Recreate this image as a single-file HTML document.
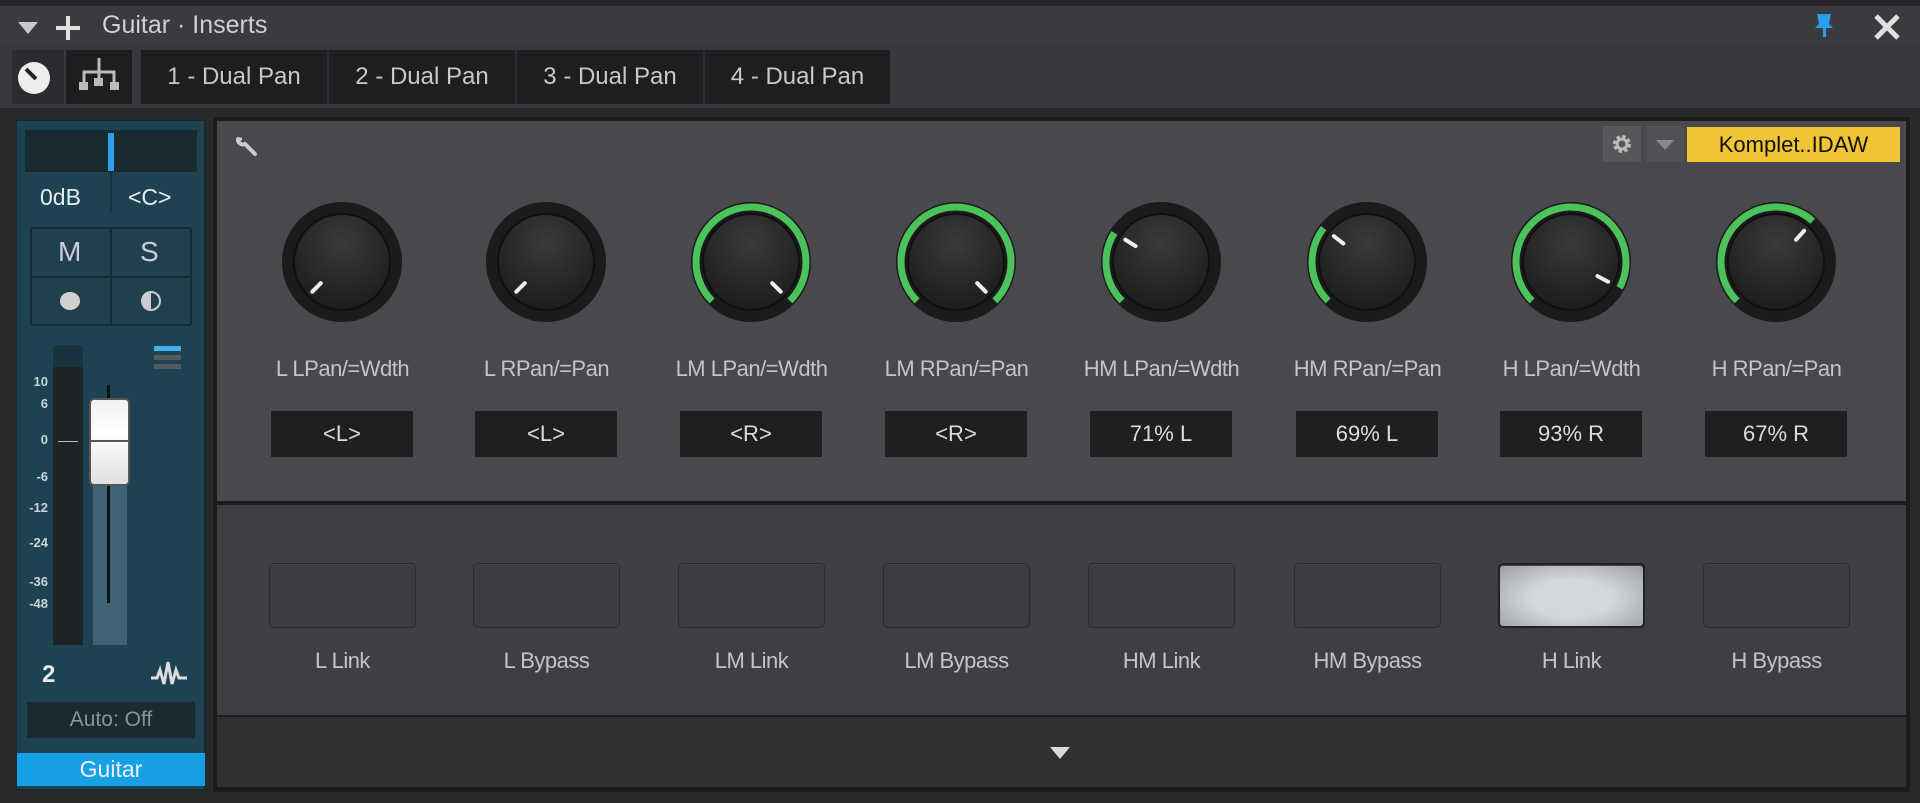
<!DOCTYPE html>
<html><head><meta charset="utf-8"><style>
*{margin:0;padding:0;box-sizing:border-box}
body{width:1920px;height:803px;background:#26272a;font-family:"Liberation Sans",sans-serif;position:relative;overflow:hidden;color:#c9cacc}
.a{position:absolute}
.tab{position:absolute;top:50px;height:54px;background:#1d1e20;color:#c8c9cb;font-size:24px;line-height:54px;text-align:center;border-right:2px solid #2c2d30}
.lbl{position:absolute;width:205px;text-align:center;font-size:22px;color:#c3c4c6;letter-spacing:-0.5px}
.val{position:absolute;width:142px;height:46px;background:#1e1f21;text-align:center;line-height:46px;font-size:22px;color:#dcdcdc}
.btn{position:absolute;width:147px;height:65px;border-radius:5px;background:#3b3c3f;border:1px solid #2a2b2d;box-shadow:inset 0 1px 0 #46474a}
.sc{position:absolute;left:24px;width:24px;text-align:right;font-size:13px;font-weight:bold;color:#c8d4da}
</style></head><body>
<div class="a" style="left:0;top:0;width:1920px;height:6px;background:#232426"></div>
<div class="a" style="left:0;top:6px;width:1920px;height:40px;background:#3a3b3e"></div>
<svg class="a" style="left:16px;top:14px" width="30" height="30"><polygon points="2,8 22,8 12,20" fill="#c8c8c8"/></svg>
<svg class="a" style="left:54px;top:14px" width="30" height="30"><rect x="2" y="12" width="24" height="4" fill="#e0e0e0"/><rect x="12" y="2" width="4" height="24" fill="#e0e0e0"/></svg>
<div class="a" style="left:102px;top:11px;font-size:25px;color:#d0d0d0">Guitar · Inserts</div>
<svg class="a" style="left:1812px;top:12px" width="26" height="30"><path d="M5 2h14l-2 10 4 4H3l4-4z" fill="#2a9ff0"/><rect x="11" y="15" width="3" height="10" fill="#2a9ff0"/></svg>
<svg class="a" style="left:1872px;top:12px" width="30" height="30"><path d="M4 4L26 26M26 4L4 26" stroke="#e0e0e0" stroke-width="5"/></svg>
<div class="a" style="left:0;top:46px;width:1920px;height:62px;background:#37383b"></div>
<div class="a" style="left:12px;top:50px;width:52px;height:54px;background:#2b2c2f"></div>
<svg class="a" style="left:14px;top:58px" width="40" height="40"><circle cx="20" cy="20" r="16" fill="#eee"/><path d="M12 11L22 21" stroke="#222" stroke-width="4"/></svg>
<div class="a" style="left:66px;top:50px;width:66px;height:54px;background:#1d1e20"></div>
<svg class="a" style="left:74px;top:56px" width="50" height="42"><g fill="none" stroke="#bbb" stroke-width="3"><path d="M25 2v12M10 26v-10h30v10M25 14v10"/></g><rect x="5" y="26" width="9" height="8" fill="#bbb"/><rect x="20" y="22" width="9" height="8" fill="#bbb"/><rect x="36" y="26" width="9" height="8" fill="#bbb"/></svg>
<div class="tab" style="left:141px;width:188px">1 - Dual Pan</div>
<div class="tab" style="left:329px;width:188px">2 - Dual Pan</div>
<div class="tab" style="left:517px;width:188px">3 - Dual Pan</div>
<div class="tab" style="left:705px;width:185px;border-right:none">4 - Dual Pan</div>
<div class="a" style="left:0;top:108px;width:1920px;height:695px;background:#29292c"></div>
<div class="a" style="left:15px;top:119px;width:191px;height:672px;background:#1d4252;border:2px solid #142c36"></div>
<div class="a" style="left:25px;top:130px;width:172px;height:42px;background:#1a2a31"></div>
<div class="a" style="left:108px;top:133px;width:6px;height:38px;background:#2aa2ef"></div>
<div class="a" style="left:110px;top:172px;width:2px;height:40px;background:#163340"></div>
<div class="a" style="left:40px;top:184px;font-size:23px;color:#e8eef0">0dB</div>
<div class="a" style="left:128px;top:184px;font-size:23px;color:#e8eef0">&lt;C&gt;</div>
<div class="a" style="left:30px;top:227px;width:162px;height:99px;background:#21404e;border:2px solid #132b35;border-radius:3px"></div>
<div class="a" style="left:110px;top:229px;width:2px;height:95px;background:#132b35"></div>
<div class="a" style="left:32px;top:276px;width:158px;height:2px;background:#132b35"></div>
<div class="a" style="left:58px;top:236px;font-size:28px;color:#ccd">M</div>
<div class="a" style="left:140px;top:236px;font-size:28px;color:#ccd">S</div>
<div class="a" style="left:60px;top:292px;width:20px;height:18px;border-radius:50%;background:#d0d0d0"></div>
<svg class="a" style="left:140px;top:290px" width="24" height="22"><circle cx="11" cy="11" r="9" fill="none" stroke="#ccc" stroke-width="2"/><path d="M11 2a9 9 0 0 0 0 18z" fill="#ccc"/></svg>
<div class="a" style="left:53px;top:345px;width:30px;height:300px;background:#1d2226"></div>
<div class="a" style="left:53px;top:345px;width:30px;height:22px;background:#18323e"></div>
<div class="a" style="left:93px;top:485px;width:34px;height:160px;background:#3f6575"></div>
<div class="a" style="left:107px;top:385px;width:3px;height:218px;background:#0c1418"></div>
<div class="a" style="left:89px;top:398px;width:41px;height:88px;border-radius:5px;background:linear-gradient(#f2f2f2,#fff 40%,#e0e0e0);border:2px solid #555"></div>
<div class="a" style="left:91px;top:440px;width:37px;height:2px;background:#555"></div>
<div class="sc" style="top:374px">10</div><div class="sc" style="top:396px">6</div>
<div class="sc" style="top:432px">0</div><div class="sc" style="top:469px">-6</div>
<div class="sc" style="top:500px">-12</div><div class="sc" style="top:535px">-24</div>
<div class="sc" style="top:574px">-36</div><div class="sc" style="top:596px">-48</div>
<div class="a" style="left:58px;top:441px;width:20px;height:1px;background:#bbb"></div>
<div class="a" style="left:154px;top:346px;width:27px;height:5px;background:#46b0ee"></div>
<div class="a" style="left:154px;top:355px;width:27px;height:5px;background:#55595c"></div>
<div class="a" style="left:154px;top:364px;width:27px;height:5px;background:#55595c"></div>
<div class="a" style="left:42px;top:661px;font-size:24px;font-weight:bold;color:#e6eaec">2</div>
<svg class="a" style="left:150px;top:660px" width="40" height="28"><path d="M1 18h6l3-8 4 14 4-22 4 22 4-14 3 8h8" fill="none" stroke="#ddd" stroke-width="3"/></svg>
<div class="a" style="left:27px;top:702px;width:168px;height:36px;background:#1a2a31;text-align:center;line-height:36px;font-size:21px;color:#8b9398">Auto: Off</div>
<div class="a" style="left:17px;top:753px;width:188px;height:33px;background:#16a1e4;text-align:center;line-height:33px;font-size:23px;color:#eef">Guitar</div>
<div class="a" style="left:213px;top:117px;width:1697px;height:675px;background:#1c1c1e"></div>
<div class="a" style="left:217px;top:121px;width:1689px;height:380px;background:#48494c"></div>
<div class="a" style="left:217px;top:505px;width:1689px;height:210px;background:#3e3f42"></div>
<div class="a" style="left:217px;top:717px;width:1689px;height:70px;background:#2f3032"></div>
<svg class="a" style="left:233px;top:133px" width="28" height="28"><path d="M5 6a5 5 0 0 0 7 5l10 10" fill="none" stroke="#ccc" stroke-width="4" stroke-linecap="round"/><path d="M5 6l4 0" stroke="#ccc" stroke-width="3"/></svg>
<div class="a" style="left:1603px;top:126px;width:38px;height:36px;background:#56575a"></div>
<svg class="a" style="left:1610px;top:132px" width="24" height="24"><circle cx="12" cy="12" r="7" fill="none" stroke="#bbb" stroke-width="4" stroke-dasharray="3.2 2.3"/><circle cx="12" cy="12" r="5" fill="none" stroke="#bbb" stroke-width="3"/></svg>
<div class="a" style="left:1646px;top:126px;width:38px;height:36px;background:#505154"></div>
<svg class="a" style="left:1654px;top:138px" width="22" height="14"><polygon points="2,2 20,2 11,12" fill="#888"/></svg>
<div class="a" style="left:1687px;top:127px;width:213px;height:35px;background:#f1c535;color:#111;font-size:22px;line-height:35px;text-align:center">Komplet..IDAW</div>
<svg id="kn" class="a" style="left:0;top:0" width="1920" height="803"></svg>
<div id="ctl"></div>
<svg class="a" style="left:1048px;top:745px" width="24" height="16"><polygon points="2,2 22,2 12,14" fill="#d8d8d8"/></svg>
<script>
var cx=[342,546,751,956,1161,1367,1571,1776],cy=262;
var names=["L LPan/=Wdth","L RPan/=Pan","LM LPan/=Wdth","LM RPan/=Pan","HM LPan/=Wdth","HM RPan/=Pan","H LPan/=Wdth","H RPan/=Pan"];
var vals=["&lt;L&gt;","&lt;L&gt;","&lt;R&gt;","&lt;R&gt;","71% L","69% L","93% R","67% R"];
var ang=[-135,-135,135,135,-58,-52,118,42];
var bl=["L Link","L Bypass","LM Link","LM Bypass","HM Link","HM Bypass","H Link","H Bypass"];
function P(x,y,r,a){a=a*Math.PI/180;return [x+r*Math.sin(a),y-r*Math.cos(a)];}
var s='<defs><radialGradient id="g" cx="50%" cy="30%" r="70%"><stop offset="0" stop-color="#3a3a3c"/><stop offset="1" stop-color="#1c1c1d"/></radialGradient></defs>';
var h='';
for(var i=0;i<8;i++){var x=cx[i];
s+='<circle cx="'+x+'" cy="'+cy+'" r="60" fill="#1b1b1c"/>';
if(ang[i]>-135){var a=P(x,cy,55,-135),b=P(x,cy,55,ang[i]);var lg=(ang[i]+135)>180?1:0;
s+='<path d="M'+a[0]+' '+a[1]+'A55 55 0 '+lg+' 1 '+b[0]+' '+b[1]+'" fill="none" stroke="#4cc35a" stroke-width="7"/>';}
s+='<circle cx="'+x+'" cy="'+cy+'" r="48" fill="url(#g)" stroke="#101011" stroke-width="2"/>';
var p1=P(x,cy,30,ang[i]),p2=P(x,cy,42,ang[i]);
s+='<line x1="'+p1[0]+'" y1="'+p1[1]+'" x2="'+p2[0]+'" y2="'+p2[1]+'" stroke="#eee" stroke-width="4" stroke-linecap="round"/>';
h+='<div class="lbl" style="left:'+(x-102)+'px;top:356px">'+names[i]+'</div>';
h+='<div class="val" style="left:'+(x-71)+'px;top:411px">'+vals[i]+'</div>';
h+='<div class="btn" style="left:'+(x-73)+'px;top:563px'+(i==6?';background:radial-gradient(ellipse at 50% 55%,#d4d7db 40%,#9a9da2);border:2px solid #222':'')+'"></div>';
h+='<div class="lbl" style="left:'+(x-102)+'px;top:648px">'+bl[i]+'</div>';}
document.getElementById('kn').innerHTML=s;document.getElementById('ctl').innerHTML=h;
</script>
</body></html>
